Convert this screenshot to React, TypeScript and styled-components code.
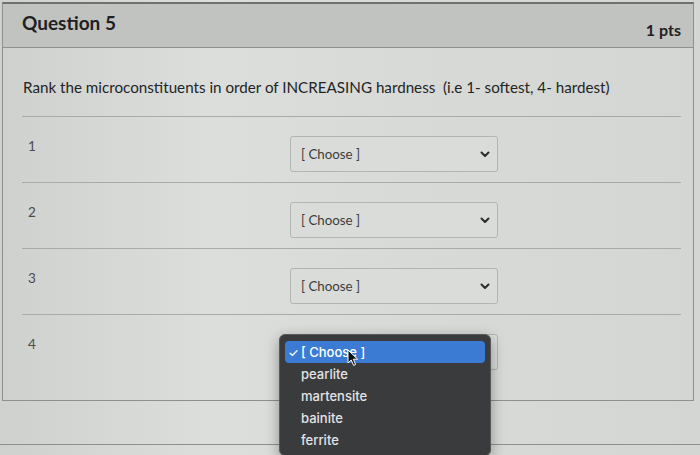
import styled, { createGlobalStyle } from "styled-components";

const GlobalStyle = createGlobalStyle`
    html, body {
        margin: 0;
        padding: 0;
        background: #d2d4d1;
        overflow: hidden;
    }
    body {
        font-family: Lato, "Open Sans", sans-serif;
        color: #2d2f30;
    }
`;

const Page = styled.div`
    width: 700px;
    height: 455px;
    overflow: hidden;
    background: linear-gradient(90deg, #cfd1ce 0%, #dcdedb 30%, #d8dad7 60%, #d4d6d3 100%);
`;

const Card = styled.section`
    margin: 2px 6px 0 2px;
    border: 1px solid #8e908d;
    border-top: 2px solid #6f716e;
`;

const Header = styled.header`
    height: 44px;
    display: flex;
    align-items: center;
    justify-content: space-between;
    padding: 0 12px 6px 19px;
    box-sizing: border-box;
    background: #c1c3c0;
    border-bottom: 1px solid #8e908d;
`;

const Title = styled.h2`
    margin: 0;
    font-size: 19px;
    font-weight: 700;
    color: #1f2122;
`;

const Points = styled.span`
    font-size: 16px;
    font-weight: 700;
    margin-top: 14px;
    color: #1f2122;
`;

const Body = styled.div`
    padding: 0 12px 20px 19px;
`;

const Prompt = styled.p`
    margin: 0;
    padding: 29px 0 19px 1px;
    font-size: 15.2px;
    line-height: 20px;
    color: #222425;
    white-space: pre;
`;

const List = styled.div`
    display: flex;
    flex-direction: column;
`;

const Row = styled.div`
    display: grid;
    grid-template-columns: 268px 208px;
    height: 65px;
    border-top: 1px solid #a9aba8;
`;

const Num = styled.span`
    padding: 21px 0 0 6px;
    font-size: 13.5px;
    color: #4a4c4d;
`;

const SelectBox = styled.div`
    position: relative;
    margin-top: 19px;
    height: 36px;
    box-sizing: border-box;
    display: flex;
    align-items: center;
    justify-content: space-between;
    padding: 0 7px 0 10px;
    border: 1px solid #b3b5b2;
    border-radius: 3px;
    background: #dadcd9;
    font-size: 13.3px;
    color: #3a3c3d;
`;

const Label = styled.span<{ hidden?: boolean }>`
    visibility: ${(p) => (p.hidden ? "hidden" : "visible")};
`;

const Menu = styled.div`
    position: absolute;
    left: -12px;
    top: -1px;
    width: 212px;
    padding: 6px 5px 4px;
    box-sizing: border-box;
    border-radius: 6px;
    background: #3a3b3d;
    border: 1px solid #58595b;
    box-shadow: 0 4px 14px rgba(0, 0, 0, 0.35);
    font-family: Inter, "Noto Sans", sans-serif;
    font-weight: 500;
    font-size: 13px;
    z-index: 2;
`;

const Option = styled.div<{ active?: boolean }>`
    height: 22px;
    display: flex;
    align-items: center;
    padding-left: ${(p) => (p.active ? "3px" : "16px")};
    border-radius: 4px;
    color: ${(p) => (p.active ? "#ffffff" : "#e4e4e6")};
    background: ${(p) => (p.active ? "#3b7bd4" : "transparent")};
`;

const Check = styled.span`
    width: 13px;
    font-size: 12px;
`;

const Cursor = styled.svg`
    position: absolute;
    left: 67px;
    top: 14px;
    z-index: 3;
`;

const NextCard = styled.div`
    margin-top: 43px;
    border-top: 1px solid #8e908d;
`;

function Chevron() {
    return (
        <svg width="10" height="7" viewBox="0 0 10 7">
            <path d="M1.5 1.5 L5 5 L8.5 1.5" fill="none" stroke="#2a2c2d" strokeWidth="2" strokeLinecap="round" strokeLinejoin="round" />
        </svg>
    );
}

const options = ["pearlite", "martensite", "bainite", "ferrite"];

function App() {
    return (
        <Page>
            <GlobalStyle />
            <Card>
                <Header>
                    <Title>Question 5</Title>
                    <Points>1 pts</Points>
                </Header>
                <Body>
                    <Prompt>Rank the microconstituents in order of INCREASING hardness  (i.e 1- softest, 4- hardest)</Prompt>
                    <List>
                        {[1, 2, 3, 4].map((n) => {
                            const open = n === 4;
                            return (
                                <Row key={n}>
                                    <Num>{n}</Num>
                                    <div>
                                        <SelectBox>
                                            <Label hidden={open}>[ Choose ]</Label>
                                            <Chevron />
                                            {open && (
                                                <Menu>
                                                    <Option active>
                                                        <Check>✓</Check>
                                                        <span>[ Choose ]</span>
                                                    </Option>
                                                    {options.map((o) => (
                                                        <Option key={o}>{o}</Option>
                                                    ))}
                                                    <Cursor width="12" height="18" viewBox="0 0 12 18">
                                                        <path d="M1 1 L1 14 L4.2 11 L6.6 16.4 L8.6 15.5 L6.3 10.2 L10.6 10.2 Z" fill="#111" stroke="#fff" strokeWidth="1" strokeLinejoin="round" />
                                                    </Cursor>
                                                </Menu>
                                            )}
                                        </SelectBox>
                                    </div>
                                </Row>
                            );
                        })}
                    </List>
                </Body>
            </Card>
            <NextCard />
        </Page>
    );
}

export default App;
